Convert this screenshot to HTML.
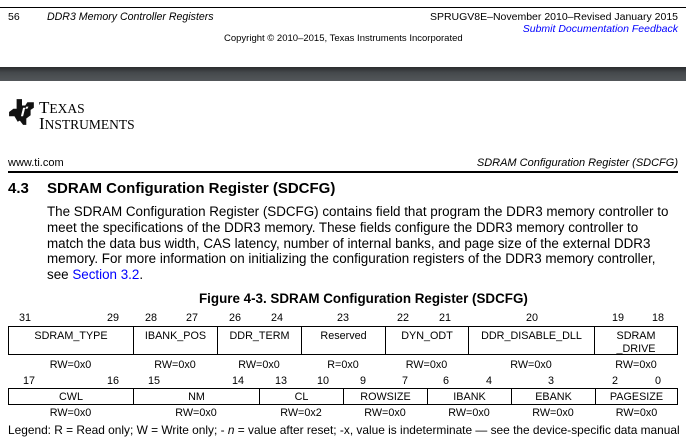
<!DOCTYPE html>
<html><head><meta charset="utf-8"><style>
*{margin:0;padding:0;box-sizing:border-box}
body{width:686px;height:440px;background:#fff;position:relative;overflow:hidden;font-family:"Liberation Sans",Arial,sans-serif;color:#000}
.a{position:absolute;white-space:nowrap}
.t{position:absolute;font-size:10.8px;text-align:center}
.box{position:absolute;border:1px solid #000;border-right:none;font-size:10.8px;text-align:center}
.n{position:absolute;font-size:10.8px}
</style></head><body>
<div class="a" style="left:0;top:7px;width:686px;height:1px;background:#000"></div>
<div class="a" style="left:8px;top:11px;font-size:10.5px">56</div>
<div class="a" style="left:47px;top:11px;font-size:10.6px;font-style:italic">DDR3 Memory Controller Registers</div>
<div class="a" style="right:8px;top:11px;font-size:10.5px">SPRUGV8E–November 2010–Revised January 2015</div>
<div class="a" style="right:8px;top:23px;font-size:10.5px;font-style:italic;color:#0000ff">Submit Documentation Feedback</div>
<div class="a" style="left:224px;top:33px;font-size:9.5px">Copyright © 2010–2015, Texas Instruments Incorporated</div>
<div class="a" style="left:0;top:67px;width:686px;height:14px;background:linear-gradient(#2a2c2e,#45494c 40%,#53575a)"></div>
<svg class="a" style="left:8px;top:98px" width="28" height="28" viewBox="0 0 26 26"><path d="M8 1h5v6h3l2-3h6v5l-3 2v5l-4 3v6h-3l-3-4-2 1-3-5H1v-4l4-3h3z" fill="#111"/><path d="M14 9h2l-2 8h-2zM17 8h2l-1 2h-2z" fill="#fff"/></svg>
<div class="a" style="left:39px;top:100px;font-family:'Liberation Serif',serif;font-size:17px;line-height:15px">T<span style="font-size:13.5px">EXAS</span><br>I<span style="font-size:13.5px">NSTRUMENTS</span></div>
<div class="a" style="left:8px;top:157px;font-size:11px">www.ti.com</div>
<div class="a" style="right:8px;top:157px;font-size:11px;font-style:italic">SDRAM Configuration Register (SDCFG)</div>
<div class="a" style="left:8px;top:171px;width:670px;height:2px;background:#000"></div>
<div class="a" style="left:8px;top:180px;font-size:15px;font-weight:bold">4.3</div>
<div class="a" style="left:47px;top:180px;font-size:15px;font-weight:bold">SDRAM Configuration Register (SDCFG)</div>
<div class="a" style="left:47px;top:204px;font-size:13.4px;line-height:15.8px">The SDRAM Configuration Register (SDCFG) contains field that program the DDR3 memory controller to<br>meet the specifications of the DDR3 memory. These fields configure the DDR3 memory controller to<br>match the data bus width, CAS latency, number of internal banks, and page size of the external DDR3<br>memory. For more information on initializing the configuration registers of the DDR3 memory controller,<br>see <span style="color:#0000ff">Section 3.2</span>.</div>
<div class="a" style="left:199px;top:291px;font-size:13.4px;font-weight:bold">Figure 4-3. SDRAM Configuration Register (SDCFG)</div>

<div class="n" style="left:19px;top:312px">31</div><div class="n" style="left:107px;top:312px">29</div>
<div class="n" style="left:145px;top:312px">28</div><div class="n" style="left:186px;top:312px">27</div>
<div class="n" style="left:229px;top:312px">26</div><div class="n" style="left:271px;top:312px">24</div>
<div class="n" style="left:337px;top:312px">23</div>
<div class="n" style="left:397px;top:312px">22</div><div class="n" style="left:439px;top:312px">21</div>
<div class="n" style="left:526px;top:312px">20</div>
<div class="n" style="left:612px;top:312px">19</div><div class="n" style="left:652px;top:312px">18</div>

<div class="box" style="left:8px;top:326px;width:125px;height:29px;padding-top:3px">SDRAM_TYPE</div>
<div class="box" style="left:133px;top:326px;width:84px;height:29px;padding-top:3px">IBANK_POS</div>
<div class="box" style="left:217px;top:326px;width:84px;height:29px;padding-top:3px">DDR_TERM</div>
<div class="box" style="left:301px;top:326px;width:84px;height:29px;padding-top:3px">Reserved</div>
<div class="box" style="left:385px;top:326px;width:83px;height:29px;padding-top:3px">DYN_ODT</div>
<div class="box" style="left:468px;top:326px;width:126px;height:29px;padding-top:3px">DDR_DISABLE_DLL</div>
<div class="box" style="left:594px;top:326px;width:84px;height:29px;padding-top:3px;border-right:1px solid #000;line-height:13px">SDRAM<br>_DRIVE</div>

<div class="t" style="left:8px;top:359px;width:125px">RW=0x0</div>
<div class="t" style="left:133px;top:359px;width:84px">RW=0x0</div>
<div class="t" style="left:217px;top:359px;width:84px">RW=0x0</div>
<div class="t" style="left:301px;top:359px;width:84px">R=0x0</div>
<div class="t" style="left:385px;top:359px;width:83px">RW=0x0</div>
<div class="t" style="left:468px;top:359px;width:126px">RW=0x0</div>
<div class="t" style="left:594px;top:359px;width:84px">RW=0x0</div>

<div class="n" style="left:23px;top:375px">17</div><div class="n" style="left:107px;top:375px">16</div>
<div class="n" style="left:148px;top:375px">15</div><div class="n" style="left:232px;top:375px">14</div>
<div class="n" style="left:275px;top:375px">13</div><div class="n" style="left:317px;top:375px">10</div>
<div class="n" style="left:360px;top:375px">9</div><div class="n" style="left:402px;top:375px">7</div>
<div class="n" style="left:443px;top:375px">6</div><div class="n" style="left:486px;top:375px">4</div>
<div class="n" style="left:548px;top:375px">3</div>
<div class="n" style="left:612px;top:375px">2</div><div class="n" style="left:655px;top:375px">0</div>

<div class="box" style="left:8px;top:388px;width:125px;height:17px;padding-top:2px">CWL</div>
<div class="box" style="left:133px;top:388px;width:126px;height:17px;padding-top:2px">NM</div>
<div class="box" style="left:259px;top:388px;width:84px;height:17px;padding-top:2px">CL</div>
<div class="box" style="left:343px;top:388px;width:84px;height:17px;padding-top:2px">ROWSIZE</div>
<div class="box" style="left:427px;top:388px;width:84px;height:17px;padding-top:2px">IBANK</div>
<div class="box" style="left:511px;top:388px;width:84px;height:17px;padding-top:2px">EBANK</div>
<div class="box" style="left:595px;top:388px;width:83px;height:17px;padding-top:2px;border-right:1px solid #000">PAGESIZE</div>

<div class="t" style="left:8px;top:407px;width:125px">RW=0x0</div>
<div class="t" style="left:133px;top:407px;width:126px">RW=0x0</div>
<div class="t" style="left:259px;top:407px;width:84px">RW=0x2</div>
<div class="t" style="left:343px;top:407px;width:84px">RW=0x0</div>
<div class="t" style="left:427px;top:407px;width:84px">RW=0x0</div>
<div class="t" style="left:511px;top:407px;width:84px">RW=0x0</div>
<div class="t" style="left:595px;top:407px;width:83px">RW=0x0</div>

<div class="a" style="left:8px;top:423px;font-size:11.9px">Legend: R = Read only; W = Write only; - <i>n</i> = value after reset; -x, value is indeterminate — see the device-specific data manual</div>
</body></html>
